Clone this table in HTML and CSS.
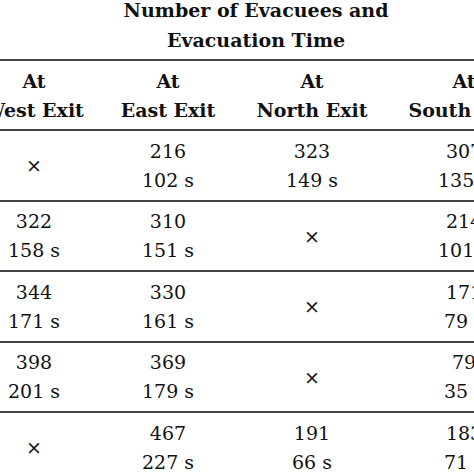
FILE: index.html
```html
<!DOCTYPE html>
<html>
<head>
<meta charset="utf-8">
<link rel="stylesheet" href="styles.css">
</head>
<body>
<table class="tbl">
  <colgroup>
    <col class="c1"><col class="c2"><col class="c3"><col class="c4">
  </colgroup>
  <thead>
    <tr class="title-row">
      <th colspan="4">Number of Evacuees and<br>Evacuation Time</th>
    </tr>
    <tr class="head-row">
      <th>At<br>West Exit</th>
      <th>At<br>East Exit</th>
      <th>At<br>North Exit</th>
      <th>At<br>South Exit</th>
    </tr>
  </thead>
  <tbody>
    <tr><td>×</td><td>216<br>102 s</td><td>323<br>149 s</td><td>307<br>135 s</td></tr>
    <tr><td>322<br>158 s</td><td>310<br>151 s</td><td>×</td><td>214<br>101 s</td></tr>
    <tr><td>344<br>171 s</td><td>330<br>161 s</td><td>×</td><td>171<br>79 s</td></tr>
    <tr><td>398<br>201 s</td><td>369<br>179 s</td><td>×</td><td>79<br>35 s</td></tr>
    <tr><td>×</td><td>467<br>227 s</td><td>191<br>66 s</td><td>183<br>71 s</td></tr>
  </tbody>
</table>
</body>
</html>
```
FILE: styles.css
```css
html, body {
  margin: 0;
  padding: 0;
  background: #fff;
}
body {
  overflow: hidden;
  width: 474px;
  height: 474px;
  font-family: "DejaVu Serif", serif;
  font-size: 19px;
  color: #111;
}
.tbl {
  border-collapse: collapse;
  table-layout: fixed;
  width: 572px;
  margin-left: -30px;
  margin-top: -5px;
}
.c1 { width: 128px; }
.c2 { width: 140px; }
.c3 { width: 148px; }
.c4 { width: 156px; }
.tbl th, .tbl td {
  padding: 0;
  text-align: center;
  vertical-align: middle;
  line-height: 29px;
  white-space: nowrap;
}
.tbl th { font-weight: bold; }
.title-row th {
  line-height: 30px;
  padding-bottom: 4px;
  border-bottom: 2px solid #444;
}
.head-row th {
  padding-top: 6px;
  padding-bottom: 4px;
  border-bottom: 2px solid #444;
}
.tbl tbody td {
  padding-top: 5.5px;
  padding-bottom: 5px;
  font-weight: normal;
}
.tbl tbody tr {
  border-bottom: 2px solid #444;
}
.tbl tbody tr:last-child {
  border-bottom: none;
}
```
